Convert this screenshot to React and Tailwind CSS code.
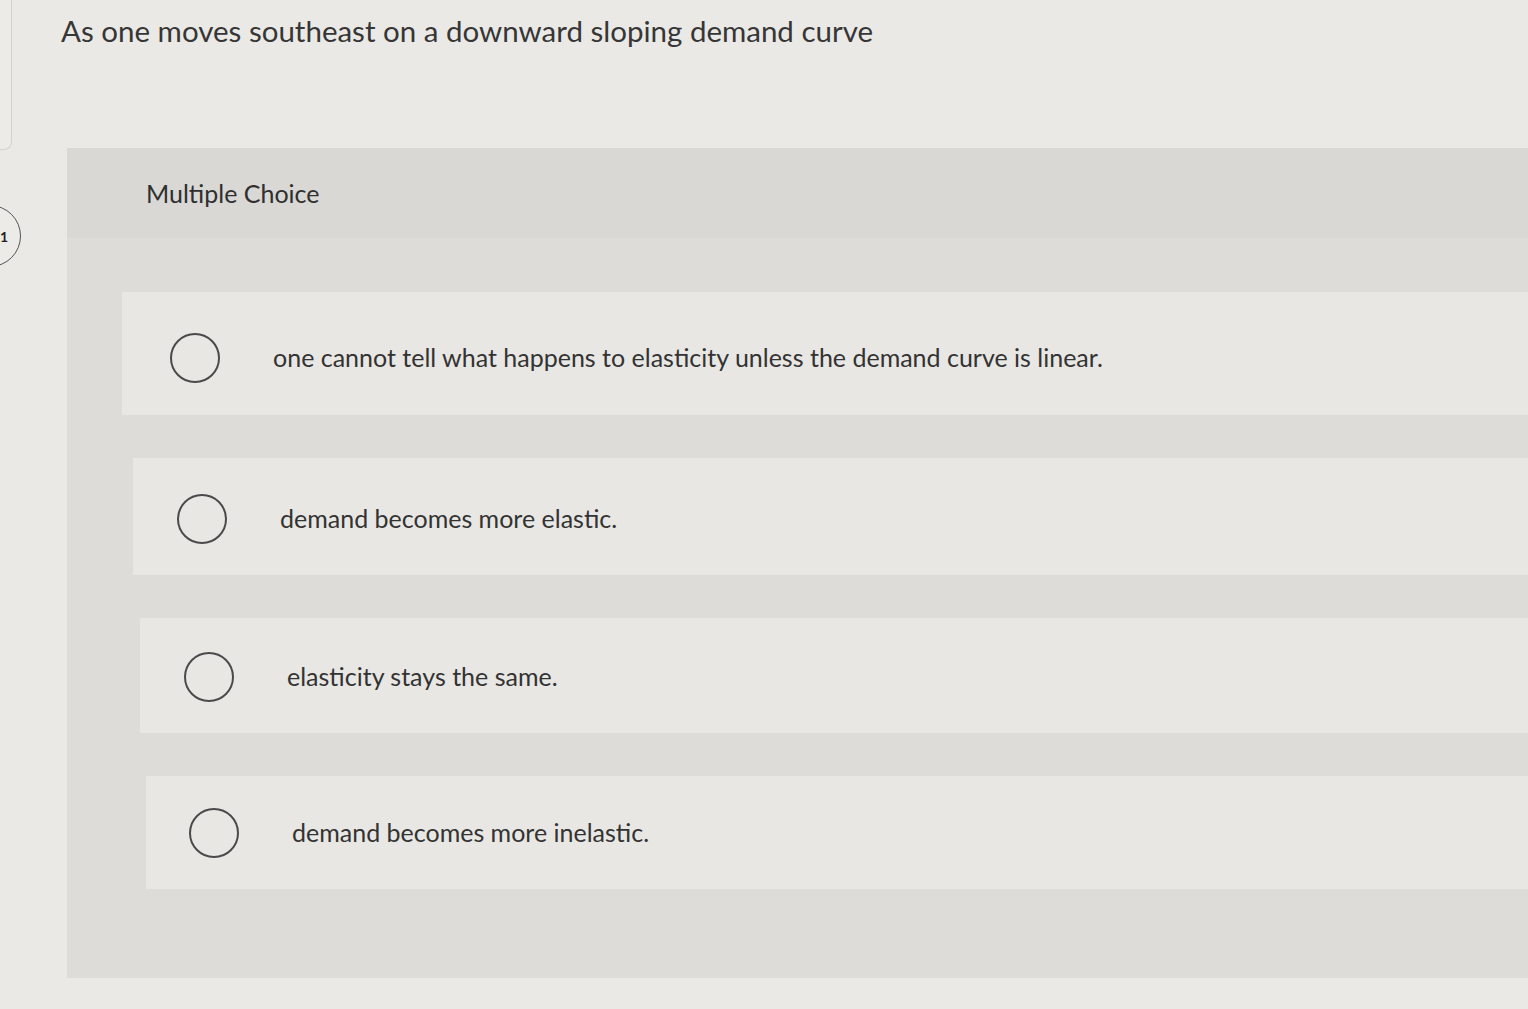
const choices = [
  { text: "one cannot tell what happens to elasticity unless the demand curve is linear.", card: "ml-[55px] h-[123px] pt-[8px]", dot: "ml-[48px]" },
  { text: "demand becomes more elastic.", card: "ml-[66px] h-[117px] pt-[4px]", dot: "ml-[44px]" },
  { text: "elasticity stays the same.", card: "ml-[73px] h-[115px] pt-[2px]", dot: "ml-[44px]" },
  { text: "demand becomes more inelastic.", card: "ml-[79px] h-[113px]", dot: "ml-[43px]" },
];

function Choice({ text, card, dot }) {
  return (
    <label className={`${card} bg-[#e8e7e4] flex items-center cursor-pointer`}>
      <span className={`${dot} w-[50px] h-[50px] rounded-full border-2 border-[#4a4a4a] shrink-0`} />
      <span className="ml-[53px] text-[25px] text-[#333333]">{text}</span>
    </label>
  );
}

export default function App() {
  return (
    <div
      className="w-full h-[1009px] bg-[#eae9e6] flex overflow-hidden"
      style={{ fontFamily: "Lato, 'Open Sans', sans-serif" }}
    >
      {/* left rail: previous card edge + question number */}
      <aside className="w-[20px] shrink-0 flex flex-col">
        <div className="w-[12px] h-[150px] border-r border-b border-[#d3d2cf] rounded-br-[8px] bg-[#ecebe8]" />
        <div className="mt-[55px] -ml-[41px] w-[62px] h-[62px] rounded-full border-[1.5px] border-[#555] bg-[#ecebe8] flex items-center justify-end pr-[12px]">
          <span className="text-[14px] font-bold text-[#222]">1</span>
        </div>
      </aside>

      <main className="flex-1 min-w-0">
        <h1 className="ml-[41px] pt-[12px] text-[29.5px] leading-[38px] text-[#363636]">
          As one moves southeast on a downward sloping demand curve
        </h1>

        <section className="ml-[47px] mt-[98px]">
          <div className="h-[90px] bg-[#d9d8d5] flex items-center pl-[79px] pt-[2px]">
            <span className="text-[25px] text-[#2f2f2f]">Multiple Choice</span>
          </div>
          <div className="bg-[#dedcd9] pt-[54px] pb-[89px] flex flex-col gap-[43px]">
            {choices.map((c) => (
              <Choice key={c.text} text={c.text} card={c.card} dot={c.dot} />
            ))}
          </div>
        </section>
      </main>
    </div>
  );
}
